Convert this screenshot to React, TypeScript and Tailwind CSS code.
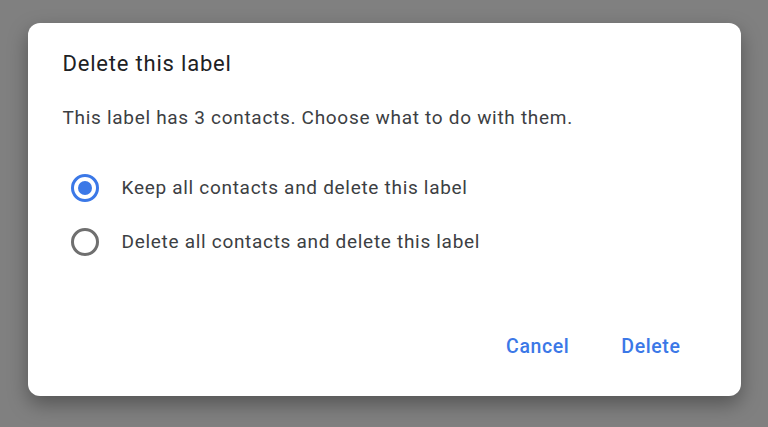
import { useState } from 'react';

const options = [
  'Keep all contacts and delete this label',
  'Delete all contacts and delete this label',
];

function Radio({ checked }: { checked: boolean }) {
  return (
    <span
      className={`flex h-[28px] w-[28px] shrink-0 items-center justify-center rounded-full border-[3px] ${
        checked ? 'border-[#3b78e7]' : 'border-[#6f6f6f]'
      }`}
    >
      {checked && <span className="h-[14px] w-[14px] rounded-full bg-[#3b78e7]" />}
    </span>
  );
}

export default function App() {
  const [choice, setChoice] = useState(0);

  return (
    <div className="flex h-[427px] w-[768px] items-start justify-center bg-[#808080] pt-[23px] font-['Roboto',sans-serif]">
      <div className="flex h-[373px] w-[713px] flex-col rounded-[12px] bg-white shadow-[0_8px_20px_rgba(0,0,0,0.35)]">
        <h2 className="pl-[35px] pt-[27px] text-[22px] leading-[28px] tracking-[0.8px] text-[#202124]">
          Delete this label
        </h2>
        <p className="pl-[35px] pt-[28px] text-[19px] leading-[24px] tracking-[0.7px] text-[#3c4043]">
          This label has 3 contacts. Choose what to do with them.
        </p>
        <div className="flex flex-col gap-[26px] pl-[43px] pt-[44px]">
          {options.map((label, i) => (
            <button
              key={label}
              onClick={() => setChoice(i)}
              className="flex items-center gap-[23px] text-left"
            >
              <Radio checked={choice === i} />
              <span className="text-[19px] leading-[28px] tracking-[0.7px] text-[#3c4043]">{label}</span>
            </button>
          ))}
        </div>
        <div className="mt-auto flex justify-end gap-[52px] pb-[37px] pr-[60px]">
          <button className="text-[19.5px] font-medium leading-[24px] tracking-[0.6px] text-[#3b78e7]">Cancel</button>
          <button className="text-[19.5px] font-medium leading-[24px] tracking-[0.6px] text-[#3b78e7]">Delete</button>
        </div>
      </div>
    </div>
  );
}
